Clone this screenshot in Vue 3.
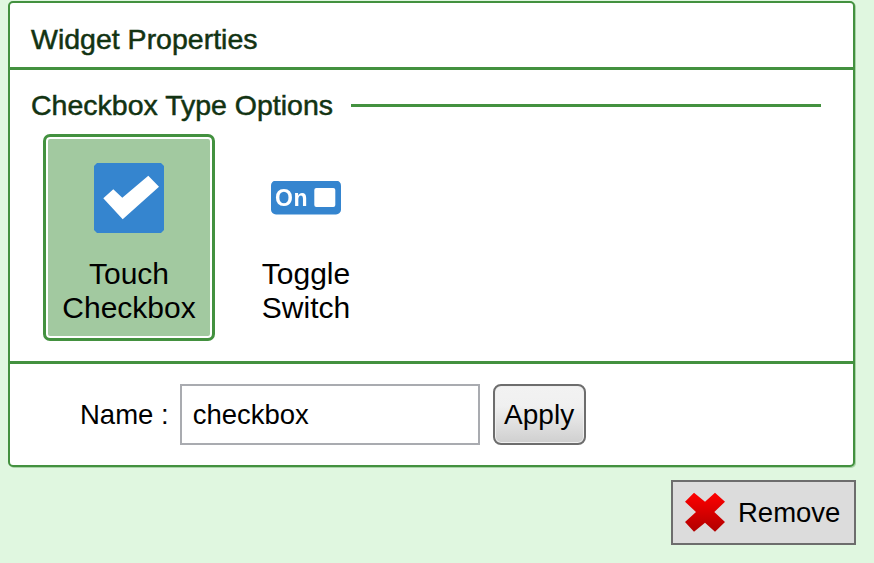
<script setup>
import { ref } from 'vue';

const options = [
  { id: 'touch', lines: ['Touch', 'Checkbox'] },
  { id: 'toggle', lines: ['Toggle', 'Switch'] }
];
const selected = ref('touch');
const name = ref('checkbox');
</script>

<template>
  <div class="page">
    <section class="panel">
      <h1 class="panel-title">Widget Properties</h1>

      <div class="type-section">
        <div class="section-head">
          <h2>Checkbox Type Options</h2>
          <span class="section-rule"></span>
        </div>
        <div class="type-list">
          <button
            v-for="opt in options"
            :key="opt.id"
            class="type-item"
            :class="{ selected: selected === opt.id }"
            @click="selected = opt.id"
          >
            <span class="type-icon">
              <svg v-if="opt.id === 'touch'" width="72" height="72" viewBox="0 0 72 72">
                <path d="M4 1H68L71 4V68L68 71H4L1 68V4Z" fill="#3585cf" />
                <path d="M10.3 36.3L20.3 27.3L29.3 35.7L55.3 13.7L66 24.7L29.7 57.3Z" fill="#fff" />
              </svg>
              <svg v-else width="72" height="34" viewBox="0 0 72 34">
                <rect x="1" y="-0.5" width="70" height="34" rx="5" fill="#3585cf" />
                <text x="5" y="25" class="on-label">On</text>
                <rect x="44.3" y="7" width="21" height="19" rx="2" fill="#fff" />
              </svg>
            </span>
            <span class="type-label">
              <span v-for="line in opt.lines" :key="line">{{ line }}</span>
            </span>
          </button>
        </div>
      </div>

      <div class="name-row">
        <label for="widget-name">Name :</label>
        <input id="widget-name" v-model="name" type="text" />
        <button class="apply">Apply</button>
      </div>
    </section>

    <div class="actions">
      <button class="remove">
        <svg class="remove-icon" width="42" height="42" viewBox="0 0 42 42">
          <defs>
            <linearGradient id="redFill" x1="0" y1="0" x2="0" y2="1">
              <stop offset="0" stop-color="#ff0000" />
              <stop offset="1" stop-color="#b00000" />
            </linearGradient>
          </defs>
          <path
            d="M9 .7L0 9.7L11 20L0 30L9 39.7L20 30.7L30 39.7L40 30L29.3 20L40 9.7L30 .7L20 9.7Z"
            fill="url(#redFill)"
          />
        </svg>
        <span>Remove</span>
      </button>
    </div>
  </div>
</template>

<style>
html,
body {
  background: #e0f7e0;
}
</style>

<style scoped>
.page {
  width: 874px;
  height: 563px;
  padding: 1px 19px 0 8px;
  box-sizing: border-box;
  overflow: hidden;
  font-family: "Liberation Sans", Arial, sans-serif;
  color: #000;
}

.panel {
  height: 466px;
  box-sizing: border-box;
  background: #fff;
  border: 2px solid #43913f;
  border-radius: 5px;
  box-shadow: 1px 1px 0 rgba(67, 145, 63, 0.35);
  display: flex;
  flex-direction: column;
}

.panel-title {
  margin: 0;
  height: 67px;
  box-sizing: border-box;
  padding: 20px 0 0 21px;
  border-bottom: 3px solid #43913f;
  font-size: 28.5px;
  line-height: 32px;
  font-weight: 400;
  color: #123312;
  -webkit-text-stroke: 0.5px #123312;
}

.type-section {
  height: 294px;
  box-sizing: border-box;
  border-bottom: 3px solid #43913f;
  padding: 19px 0 0 21px;
}

.section-head {
  display: flex;
  align-items: center;
  padding-right: 32px;
  height: 32px;
}

.section-head h2 {
  margin: 0;
  font-size: 28.5px;
  line-height: 32px;
  font-weight: 400;
  color: #123312;
  -webkit-text-stroke: 0.5px #123312;
  white-space: nowrap;
}

.section-rule {
  flex: 1;
  height: 3px;
  margin-left: 18px;
  background: #43913f;
}

.type-list {
  display: flex;
  gap: 5px;
  margin: 13px 0 0 12px;
}

.type-item {
  width: 172px;
  height: 207px;
  box-sizing: border-box;
  border: 3px solid transparent;
  border-radius: 7px;
  padding: 0;
  background: #fff;
  font: inherit;
  color: inherit;
  display: flex;
  flex-direction: column;
  align-items: center;
  cursor: pointer;
}

.type-item.selected {
  border-color: #43913f;
  background: #a2c9a0;
  box-shadow: inset 0 0 0 2px #fff;
}

.type-icon {
  height: 72px;
  margin-top: 25px;
  display: flex;
  align-items: center;
}

.type-icon svg {
  filter: blur(0.4px);
}

.on-label {
  font-family: "Liberation Sans", Arial, sans-serif;
  font-size: 23px;
  font-weight: 700;
  letter-spacing: 0.5px;
  fill: #fff;
}

.type-label {
  margin-top: 23px;
  display: flex;
  flex-direction: column;
  font-size: 30px;
  line-height: 34px;
}

.name-row {
  flex: 1;
  display: flex;
  align-items: flex-start;
  padding: 20px 0 0 70px;
}

.name-row label {
  font-size: 27.5px;
  line-height: 62px;
  margin-right: 11px;
}

.name-row input {
  width: 300px;
  height: 61px;
  box-sizing: border-box;
  border: 2px solid #a9abb0;
  padding: 0 11px;
  margin: 0;
  font: 27.5px "Liberation Sans", Arial, sans-serif;
  color: #000;
  background: #fff;
  outline: none;
}

.apply {
  width: 93px;
  height: 61px;
  margin-left: 13px;
  box-sizing: border-box;
  border: 2px solid #6d6d6d;
  border-radius: 8px;
  padding: 0;
  background: linear-gradient(#f2f2f2, #f0f0f0 35%, #cfcfcf);
  box-shadow: inset 0 0 0 1px #eee;
  font: 28px "Liberation Sans", Arial, sans-serif;
  color: #000;
}

.actions {
  display: flex;
  justify-content: flex-end;
  margin: 13px -1px 0 0;
}

.remove {
  width: 185px;
  height: 65px;
  box-sizing: border-box;
  border: 2px solid #6d6d6d;
  background: #dcdcdc;
  padding: 0 0 0 12px;
  display: flex;
  align-items: center;
  gap: 11px;
  font: 27.5px "Liberation Sans", Arial, sans-serif;
  color: #000;
}

.remove-icon {
  filter: blur(0.4px);
}
</style>
